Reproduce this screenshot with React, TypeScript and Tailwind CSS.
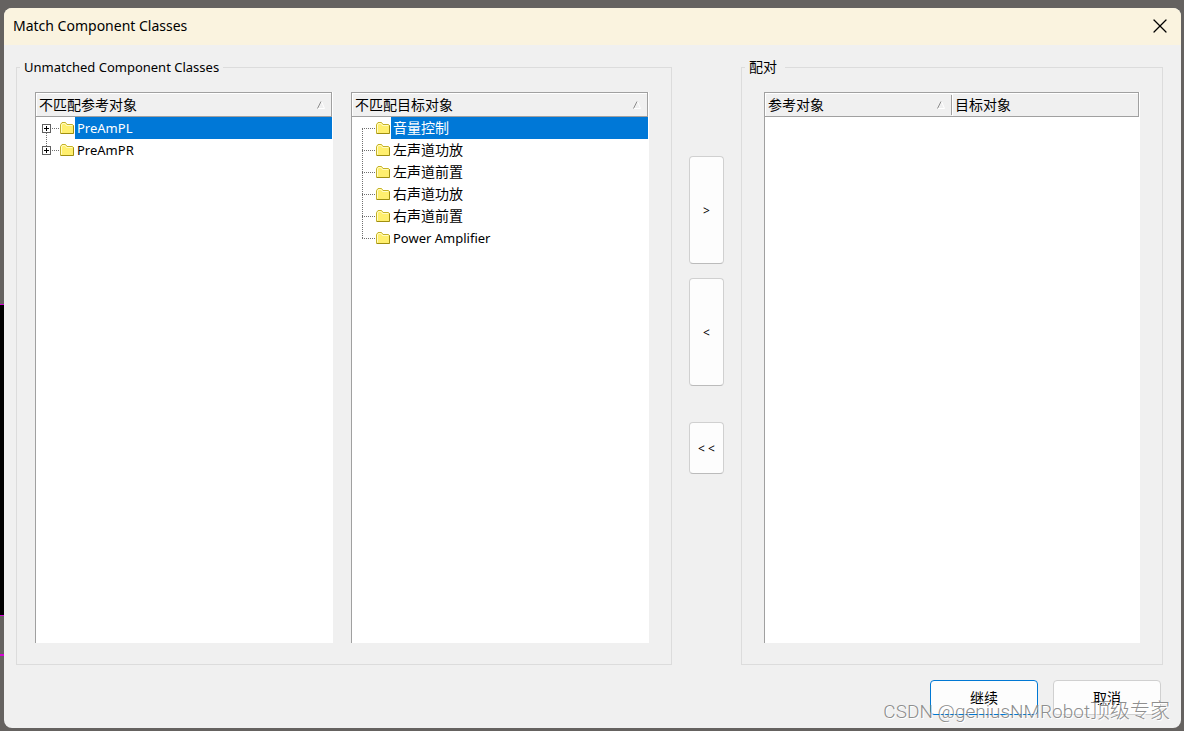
import { X } from "lucide-react";

type TreeItem = { label: string; latin?: boolean; expandable?: boolean; selected?: boolean };

const referenceItems: TreeItem[] = [
  { label: "PreAmPL", latin: true, expandable: true, selected: true },
  { label: "PreAmPR", latin: true, expandable: true },
];

const targetItems: TreeItem[] = [
  { label: "音量控制", selected: true },
  { label: "左声道功放" },
  { label: "左声道前置" },
  { label: "右声道功放" },
  { label: "右声道前置" },
  { label: "Power Amplifier", latin: true },
];

function SortIcon() {
  return (
    <svg className="h-2 w-2 shrink-0" viewBox="0 0 8 8" fill="none" aria-hidden="true">
      <path d="M4.5 .5 7.5 7.5H.5" stroke="#fff" />
      <path d="M.5 7.5 4 .5" stroke="#8c8c8c" />
    </svg>
  );
}

function FolderIcon() {
  return (
    <svg className="h-3 w-3.5 shrink-0" viewBox="0 0 14 12" aria-hidden="true">
      <path d="M.5 11V2.5L2 .5h3.5l1.5 2h5.5l1 1V11l-.5.5H1z" fill="#ffef6e" stroke="#c4b128" />
      <path d="M1.5 10.5V3l1-1.5h2.6l1.4 2H12" fill="none" stroke="#fffbc4" />
      <path d="M13.5 3.5v8H.5" fill="none" stroke="#a08f10" />
    </svg>
  );
}

// dotted connector lines, plus the [+] box for nodes with children
function Branch({ first, last, expandable }: { first: boolean; last: boolean; expandable?: boolean }) {
  return (
    <svg className="h-[22px] w-6 shrink-0" viewBox="0 0 24 22" fill="none" shapeRendering="crispEdges" aria-hidden="true">
      <g stroke="#707070" strokeDasharray="1 1">
        {!first && <path d="M10.5 0V11" />}
        {!last && <path d="M10.5 12V22" />}
        <path d="M10 11.5H24" />
      </g>
      {expandable && (
        <>
          <rect x="6.5" y="7.5" width="8" height="8" fill="#fff" stroke="#606060" />
          <path d="M8 11.5h5M10.5 9v5" stroke="#000" />
        </>
      )}
    </svg>
  );
}

function TreeList({ title, items }: { title: string; items: TreeItem[] }) {
  return (
    <div className="flex min-w-0 flex-1 flex-col border-l border-[#a0a0a0] bg-white">
      <div className="mr-px flex h-[25px] items-center justify-between border-y border-r border-[#a0a0a0] bg-[#f0f0f0] pr-1.5 pl-[3px] shadow-[inset_1px_1px_0_white]">
        <span>{title}</span>
        <SortIcon />
      </div>
      <ul role="tree" aria-label={title} className="mr-px">
        {items.map((item, i) => (
          <li key={item.label} role="treeitem" aria-selected={!!item.selected} className="flex h-[22px] items-center">
            <Branch first={i === 0} last={i === items.length - 1} expandable={item.expandable} />
            <FolderIcon />
            <span
              className={`ml-px flex-1 px-0.5 leading-[22px] ${item.latin ? "text-[13px]" : ""} ${
                item.selected ? "bg-[#0078d7] text-white" : ""
              }`}
            >
              {item.label}
            </span>
          </li>
        ))}
      </ul>
    </div>
  );
}

export default function App() {
  return (
    <div className="relative flex min-h-screen bg-[#656260] pt-2 pr-[3px] pb-[3px] font-['Noto_Sans','Noto_Sans_CJK_SC',sans-serif] text-[14px] leading-5 text-black">
      <div className="flex w-1 shrink-0 flex-col" aria-hidden="true">
        <div className="h-74" />
        <div className="h-78 border-y border-[#d800d8] bg-black" />
        <div className="h-10 border-b-2 border-[#d800d8]" />
      </div>

      <div role="dialog" aria-labelledby="dialog-title" className="flex flex-1 flex-col overflow-hidden rounded-lg bg-[#f0f0f0]">
        <header className="flex h-[37px] items-center justify-between bg-[#faf3df] pr-[9px] pb-px pl-[9px]">
          <h1 id="dialog-title">Match Component Classes</h1>
          <button type="button" aria-label="Close">
            <X className="h-6 w-6" strokeWidth={1.2} />
          </button>
        </header>

        <main className="flex flex-1 pt-3 pr-[18px] pl-3">
          <fieldset className="flex min-w-0 flex-[614] gap-[18px] border border-[#dcdcdc] pt-[15px] pr-[22px] pb-[21px] pl-[18px]">
            <legend className="-ml-[15px] px-1 text-[13px]">Unmatched Component Classes</legend>
            <TreeList title="不匹配参考对象" items={referenceItems} />
            <TreeList title="不匹配目标对象" items={targetItems} />
          </fieldset>

          <div className="mx-[17px] flex w-[35px] shrink-0 flex-col pt-[99px]">
            <button type="button" className="h-27 rounded border border-[#d0d0d0] border-b-[#bbb] bg-[#fdfdfd] pt-0.5 text-[12px]">
              &gt;
            </button>
            <button type="button" className="mt-3.5 h-27 rounded border border-[#d0d0d0] border-b-[#bbb] bg-[#fdfdfd] pt-0.5 text-[12px]">
              &lt;
            </button>
            <button type="button" className="mt-9 h-13 rounded border border-[#d0d0d0] border-b-[#bbb] bg-[#fdfdfd] pt-0.5 text-[12px]">
              &lt; &lt;
            </button>
          </div>

          <fieldset className="flex min-w-0 flex-[376] border border-[#dcdcdc] px-[22px] pt-[15px] pb-[21px]">
            <legend className="-ml-[19px] pr-2 pl-1">配对</legend>
            <div className="flex-1 border-l border-[#a0a0a0] bg-white pr-px">
              <table className="w-full table-fixed border-separate border-spacing-0 text-left">
                <thead>
                  <tr className="h-[25px] bg-[#f0f0f0]">
                    <th className="border-y border-[#a0a0a0] p-0 font-normal shadow-[inset_1px_1px_0_white]">
                      <div className="flex items-center justify-between border-r border-[#a0a0a0] pr-1.5 pl-[3px]">
                        参考对象
                        <SortIcon />
                      </div>
                    </th>
                    <th className="border-y border-r border-[#a0a0a0] p-0 pl-[3px] font-normal shadow-[inset_1px_1px_0_white]">目标对象</th>
                  </tr>
                </thead>
              </table>
            </div>
          </fieldset>
        </main>

        <footer className="flex justify-end gap-[15px] pt-[15px] pr-5 pb-[13px]">
          <button type="button" className="h-[35px] w-27 rounded border border-[#0078d4] bg-[#fdfdfd]">
            继续
          </button>
          <button type="button" className="h-[35px] w-27 rounded border border-[#d0d0d0] bg-[#fdfdfd]">
            取消
          </button>
        </footer>
      </div>

      <p className="pointer-events-none absolute right-3.5 bottom-[5px] font-['Roboto','Noto_Sans_CJK_SC',sans-serif] text-[19px] leading-7 font-light text-[#808080]/90 [text-shadow:1px_1px_0_white]">
        CSDN @geniusNMRobot<span className="text-[20px]">顶级专家</span>
      </p>
    </div>
  );
}
